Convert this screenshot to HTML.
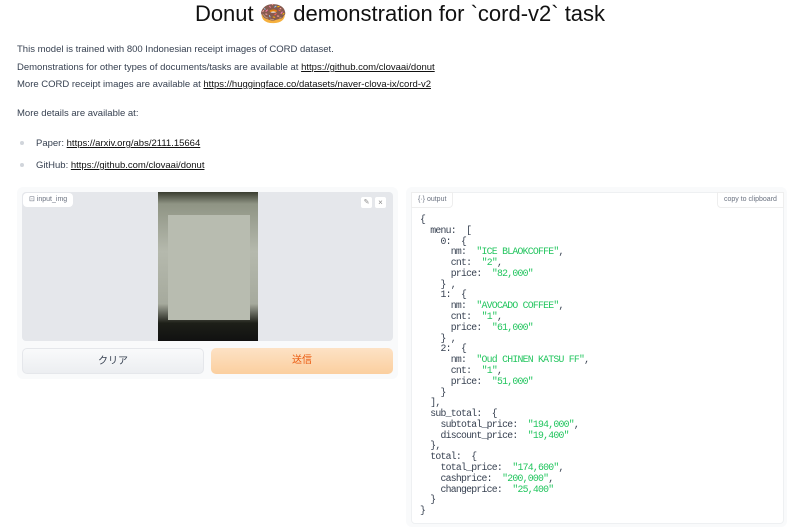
<!DOCTYPE html>
<html><head><meta charset="utf-8"><style>
body{margin:0;width:800px;height:516px;overflow:hidden;background:#fff;font-family:"Liberation Sans","Noto Sans CJK JP",sans-serif;color:#374151}
h1{position:absolute;left:0;top:0;width:800px;margin:0;text-align:center;font-size:22px;font-weight:400;line-height:26px;color:#111;top:1px}
.t{position:absolute;left:17px;font-size:9.5px;color:#374151}
.t a{color:#111;text-decoration:underline}
.dot{display:inline-block;width:4px;height:4px;border-radius:2px;background:#d1d5db;margin:0 12px 1px 3px;vertical-align:middle}
.panel{position:absolute;background:#f9fafb;border-radius:6px}
.lbl{position:absolute;background:#fff;font-size:7px;color:#6b7280;padding:0 6px;height:14px;line-height:14px;border-radius:0 0 4px 0}
pre{position:absolute;left:420px;top:215px;margin:0;font-family:"Liberation Mono",monospace;font-size:9.8px;letter-spacing:-0.75px;line-height:10.78px;color:#374151}
.g{color:#22c55e}
</style></head><body>
<h1>Donut 🍩 demonstration for `cord-v2` task</h1>
<div class="t" style="top:44px">This model is trained with 800 Indonesian receipt images of CORD dataset.</div>
<div class="t" style="top:62px">Demonstrations for other types of documents/tasks are available at <a>https://github.com/clovaai/donut</a></div>
<div class="t" style="top:79px">More CORD receipt images are available at <a>https://huggingface.co/datasets/naver-clova-ix/cord-v2</a></div>
<div class="t" style="top:108px">More details are available at:</div>
<div class="t" style="top:138px"><span class="dot"></span>Paper: <a>https://arxiv.org/abs/2111.15664</a></div>
<div class="t" style="top:160px"><span class="dot"></span>GitHub: <a>https://github.com/clovaai/donut</a></div>

<div class="panel" style="left:17px;top:187px;width:381px;height:192px"></div>
<div style="position:absolute;left:22px;top:192px;width:371px;height:149px;background:#e5e7eb;border-radius:4px"></div>
<div style="position:absolute;left:158px;top:192px;width:100px;height:149px;background:linear-gradient(#3a3d30 0,#8f9484 8%,#b5b9ad 40%,#a6aa9d 75%,#1d1f18 88%,#111 100%)"></div>
<div style="position:absolute;left:168px;top:215px;width:82px;height:105px;background:#b8bcb0"></div>
<div class="lbl" style="left:23px;top:193px;border-radius:4px">⊡ input_img</div>
<div style="position:absolute;left:361px;top:197px;width:11px;height:11px;background:#fff;border-radius:2px;font-size:7px;text-align:center;line-height:11px;color:#888">✎</div>
<div style="position:absolute;left:375px;top:197px;width:11px;height:11px;background:#fff;border-radius:2px;font-size:8px;text-align:center;line-height:11px;color:#888">×</div>
<div style="position:absolute;left:22px;top:348px;width:182px;height:26px;background:linear-gradient(#f9fafb,#eceef1);border:1px solid #e5e7eb;box-sizing:border-box;border-radius:5px;text-align:center;line-height:25px;font-size:10px;color:#374151">クリア</div>
<div style="position:absolute;left:211px;top:348px;width:182px;height:26px;background:linear-gradient(#fde2c5,#fbcf9f);border-radius:5px;text-align:center;line-height:25px;font-size:10px;color:#ea580c">送信</div>

<div class="panel" style="left:406px;top:187px;width:381px;height:340px"></div>
<div style="position:absolute;left:411px;top:192px;width:371px;height:330px;background:#fff;border:1px solid #eef0f2;border-radius:4px"></div>
<div class="lbl" style="left:411px;top:192px;border:1px solid #eee">{·} output</div>
<div class="lbl" style="left:717px;top:192px;border:1px solid #eee;border-radius:0 0 0 4px">copy to clipboard</div>
<pre>{
  menu:  [
    0:  {
      nm:  <span class="g">"ICE BLAOKCOFFE"</span>,
      cnt:  <span class="g">"2"</span>,
      price:  <span class="g">"82,000"</span>
    } ,
    1:  {
      nm:  <span class="g">"AVOCADO COFFEE"</span>,
      cnt:  <span class="g">"1"</span>,
      price:  <span class="g">"61,000"</span>
    } ,
    2:  {
      nm:  <span class="g">"Oud CHINEN KATSU FF"</span>,
      cnt:  <span class="g">"1"</span>,
      price:  <span class="g">"51,000"</span>
    }
  ],
  sub_total:  {
    subtotal_price:  <span class="g">"194,000"</span>,
    discount_price:  <span class="g">"19,400"</span>
  },
  total:  {
    total_price:  <span class="g">"174,600"</span>,
    cashprice:  <span class="g">"200,000"</span>,
    changeprice:  <span class="g">"25,400"</span>
  }
}</pre>
</body></html>
